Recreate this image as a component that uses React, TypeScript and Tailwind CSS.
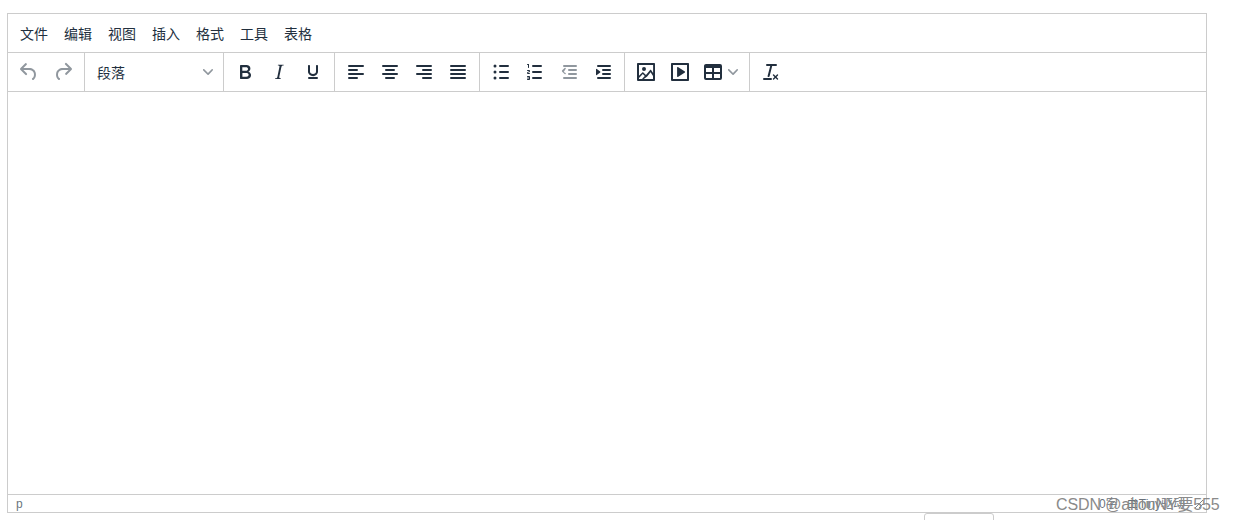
const ink = "#222f3e";

const MENUS = ["文件", "编辑", "视图", "插入", "格式", "工具", "表格"];

const Icon = ({ d, disabled, x = false }: { d: string; disabled?: boolean; x?: boolean }) => (
  <svg width="24" height="24" viewBox="0 0 24 24" fill={disabled ? "#222f3e80" : ink} fillRule={x ? "evenodd" : "nonzero"}>
    <path d={d} />
  </svg>
);

const icons = {
  undo: "M6.4 8H12c3.7 0 6.2 2 6.8 5.1.6 2.7-.4 5.6-2.3 6.8a1 1 0 0 1-1-1.8c1.1-.6 1.8-2.7 1.4-4.6-.5-2.1-2.1-3.5-4.9-3.5H6.4l3.3 3.3a1 1 0 1 1-1.4 1.4l-5-5a1 1 0 0 1 0-1.4l5-5a1 1 0 0 1 1.4 1.4L6.4 8z",
  redo: "M17.6 10H12c-2.8 0-4.4 1.4-4.9 3.5-.4 2 .3 4 1.4 4.6a1 1 0 1 1-1 1.8c-2-1.2-2.9-4.1-2.3-6.8.6-3 3.2-5.1 6.8-5.1h5.6l-3.3-3.3a1 1 0 1 1 1.4-1.4l5 5a1 1 0 0 1 0 1.4l-5 5a1 1 0 0 1-1.4-1.4l3.3-3.3z",
  bold: "M7.8 19c-.3 0-.5 0-.6-.2l-.2-.5V5.7c0-.2 0-.4.2-.5l.6-.2h5c1.5 0 2.7.3 3.5 1 .7.6 1.1 1.4 1.1 2.5a3 3 0 0 1-.6 1.9c-.4.6-1 1-1.6 1.2.4.1.9.3 1.3.6s.8.7 1 1.2c.4.4.5 1 .5 1.6 0 1.3-.4 2.3-1.3 3-.8.7-2.1 1-3.8 1H7.8zm5-8.3c.6 0 1.2-.1 1.6-.5.4-.3.6-.7.6-1.3 0-1.1-.8-1.7-2.3-1.7H9.3v3.5h3.4zm.5 6c.7 0 1.3-.1 1.7-.4.4-.4.6-.9.6-1.5s-.2-1-.7-1.4c-.4-.3-1-.4-2-.4H9.4v3.8h4z",
  italic: "M16.7 4.7l-.1.9h-.3c-.6 0-1 0-1.4.3-.3.3-.4.6-.5 1.1l-2.1 9.8v.6c0 .5.4.8 1.4.8h.2l-.2.8H8l.2-.8h.2c1.1 0 1.8-.5 2-1.5l2-9.8.1-.5c0-.6-.4-.8-1.4-.8h-.3l.2-.9h5.8z",
  underline: "M16 5c.6 0 1 .4 1 1v5.5a4 4 0 0 1-.4 1.8l-1 1.4a5.3 5.3 0 0 1-5.5 1 5 5 0 0 1-1.6-1c-.5-.4-.8-.9-1.1-1.4a4 4 0 0 1-.4-1.8V6c0-.6.4-1 1-1s1 .4 1 1v5.5c0 .3 0 .6.2 1l.6.7a3.3 3.3 0 0 0 2.2.8 3.4 3.4 0 0 0 2.2-.8c.3-.2.4-.5.6-.8l.2-.9V6c0-.6.4-1 1-1zM8 17h8a1 1 0 0 1 0 2H8a1 1 0 0 1 0-2z",
  alignLeft: "M5 5h14a1 1 0 0 1 0 2H5a1 1 0 1 1 0-2zm0 4h8a1 1 0 0 1 0 2H5a1 1 0 1 1 0-2zm0 8h8a1 1 0 0 1 0 2H5a1 1 0 0 1 0-2zm0-4h14a1 1 0 0 1 0 2H5a1 1 0 0 1 0-2z",
  alignCenter: "M5 5h14a1 1 0 0 1 0 2H5a1 1 0 1 1 0-2zm3 4h8a1 1 0 0 1 0 2H8a1 1 0 1 1 0-2zm0 8h8a1 1 0 0 1 0 2H8a1 1 0 0 1 0-2zm-3-4h14a1 1 0 0 1 0 2H5a1 1 0 0 1 0-2z",
  alignRight: "M5 5h14a1 1 0 0 1 0 2H5a1 1 0 1 1 0-2zm6 4h8a1 1 0 0 1 0 2h-8a1 1 0 0 1 0-2zm0 8h8a1 1 0 0 1 0 2h-8a1 1 0 0 1 0-2zm-6-4h14a1 1 0 0 1 0 2H5a1 1 0 0 1 0-2z",
  justify: "M5 5h14a1 1 0 0 1 0 2H5a1 1 0 1 1 0-2zm0 4h14a1 1 0 0 1 0 2H5a1 1 0 1 1 0-2zm0 4h14a1 1 0 0 1 0 2H5a1 1 0 0 1 0-2zm0 4h14a1 1 0 0 1 0 2H5a1 1 0 0 1 0-2z",
  bullets: "M11 5h8a1 1 0 0 1 0 2h-8a1 1 0 0 1 0-2zm0 6h8a1 1 0 0 1 0 2h-8a1 1 0 0 1 0-2zm0 6h8a1 1 0 0 1 0 2h-8a1 1 0 0 1 0-2zM6 4.5a1.5 1.5 0 1 1 0 3 1.5 1.5 0 0 1 0-3zm0 6a1.5 1.5 0 1 1 0 3 1.5 1.5 0 0 1 0-3zm0 6a1.5 1.5 0 1 1 0 3 1.5 1.5 0 0 1 0-3z",
  numbers: "M10 17h8a1 1 0 0 1 0 2h-8a1 1 0 0 1 0-2zm0-6h8a1 1 0 0 1 0 2h-8a1 1 0 0 1 0-2zm0-6h8a1 1 0 0 1 0 2h-8a1 1 0 1 1 0-2zM6 4v3.5c0 .3-.2.5-.5.5a.5.5 0 0 1-.5-.5V5h-.5a.5.5 0 0 1 0-1H6zm-1 8.8l.2.2h1.3c.3 0 .5.2.5.5s-.2.5-.5.5H4.9a1 1 0 0 1-.9-1V13c0-.4.3-.8.6-1l1.2-.4.2-.3a.2.2 0 0 0-.2-.2H4.5a.5.5 0 0 1-.5-.5c0-.3.2-.5.5-.5h1.6c.5 0 .9.4.9 1v.1c0 .4-.3.8-.6 1l-1.2.4-.2.3zM7 17v2c0 .6-.4 1-1 1H4.5a.5.5 0 0 1 0-1h1.2c.2 0 .3-.1.3-.3 0-.2-.1-.3-.3-.3H4.4a.4.4 0 1 1 0-.8h1.3c.2 0 .3-.1.3-.3 0-.2-.1-.3-.3-.3H4.5a.5.5 0 1 1 0-1H6c.6 0 1 .4 1 1v.1z",
  outdent: "M7 5h12a1 1 0 0 1 0 2H7a1 1 0 1 1 0-2zm5 4h7a1 1 0 0 1 0 2h-7a1 1 0 0 1 0-2zm0 4h7a1 1 0 0 1 0 2h-7a1 1 0 0 1 0-2zm-5 4h12a1 1 0 0 1 0 2H7a1 1 0 0 1 0-2zm1.6-3.9a.7.7 0 0 1-1 1l-2.4-2.4a1 1 0 0 1 0-1.4l2.4-2.4a.7.7 0 0 1 1 1L6.7 12l1.9 1.1z",
  indent: "M7 5h12a1 1 0 0 1 0 2H7a1 1 0 1 1 0-2zm5 4h7a1 1 0 0 1 0 2h-7a1 1 0 0 1 0-2zm0 4h7a1 1 0 0 1 0 2h-7a1 1 0 0 1 0-2zm-5 4h12a1 1 0 0 1 0 2H7a1 1 0 0 1 0-2zM5 9.3a.5.5 0 0 1 .8-.3l3.4 2.6a.5.5 0 0 1 0 .8L5.8 15a.5.5 0 0 1-.8-.3V9.3z",
  image: "M5 15.7l3.3-3.2c.3-.3.7-.3 1 0L12 15l4.1-5c.3-.4.8-.4 1 0l2 2.9V5H5v10.7zM5 18.1V19h3l2.8-2.9-2-2L5 18.1zm14 .9v-3.1l-2.4-3.6-3.4 4.1L9.8 19H19zM4 3h16c.6 0 1 .4 1 1v16c0 .6-.4 1-1 1H4a1 1 0 0 1-1-1V4c0-.6.4-1 1-1zm6 8a2 2 0 1 1 0-4 2 2 0 0 1 0 4z",
  media: "M4 3h16c.6 0 1 .4 1 1v16c0 .6-.4 1-1 1H4a1 1 0 0 1-1-1V4c0-.6.4-1 1-1zm1 2v14h14V5H5zm4.1 2.4c0-.4.5-.7.8-.4l7 4.5c.3.2.3.7 0 .9l-7 4.5c-.3.2-.8 0-.8-.4V7.4z",
  table: "M19 4a2 2 0 0 1 2 2v12a2 2 0 0 1-2 2H5a2 2 0 0 1-2-2V6c0-1.1.9-2 2-2h14zM5 14v4h6v-4H5zm14 0h-6v4h6v-4zm0-6h-6v4h6V8zM5 12h6V8H5v4z",
  clear: "M13.2 6l-2.6 10.2a1 1 0 0 1-1 .8h-.2a.8.8 0 0 1-.8-1L11.2 6H8a1 1 0 1 1 0-2h9a1 1 0 0 1 0 2h-3.8zM5 18h7a1 1 0 0 1 0 2H5a1 1 0 0 1 0-2zm13 1.5L16.5 18 15 19.5a.7.7 0 0 1-1-1l1.5-1.5-1.5-1.5a.7.7 0 0 1 1-1l1.5 1.5 1.5-1.5a.7.7 0 0 1 1 1L17.5 17l1.5 1.5a.7.7 0 0 1-1 1z",
};

const Chevron = ({ w = 10 }: { w?: number }) => (
  <svg width={w} height={w} viewBox="0 0 10 10" fill="#222f3e80">
    <path d="M8.7 2.2c.3-.3.8-.3 1 0 .4.4.4.9 0 1.2L5.7 7.8c-.3.3-.9.3-1.2 0L.2 3.4a.8.8 0 0 1 0-1.2c.3-.3.8-.3 1.1 0L5 6l3.7-3.8z" />
  </svg>
);

const Btn = ({ d, disabled, x }: { d: string; disabled?: boolean; x?: boolean }) => (
  <button className="flex h-[38px] w-[34px] shrink-0 items-center justify-center">
    <Icon d={d} disabled={disabled} x={x} />
  </button>
);

const Group = ({ children, last }: { children: React.ReactNode; last?: boolean }) => (
  <div className={`flex items-center ${last ? "" : "border-r border-[#ccc]"}`}>{children}</div>
);

export default function App() {
  return (
    <div className="relative h-[520px] w-[1235px] overflow-hidden bg-white pl-[7px] pt-[13px] font-['Liberation_Sans','Noto_Sans_CJK_SC',sans-serif] text-[#222f3e]">
      <div className="flex h-[500px] w-[1200px] flex-col border border-[#ccc]">
        <div className="flex h-[39px] items-center gap-4 border-b border-[#ccc] pl-3 pt-[1px] text-sm">
          {MENUS.map((m) => (
            <span key={m} className="w-7 whitespace-nowrap">{m}</span>
          ))}
        </div>

        <div className="flex h-[39px] border-b border-[#ccc]">
          <Group>
            <div className="flex w-[76px] pl-1">
              <Btn d={icons.undo} disabled />
              <Btn d={icons.redo} disabled />
            </div>
          </Group>
          <Group>
            <div className="flex w-[138px] items-center justify-between pl-3 pr-[10px] text-sm">
              <span className="pt-[1px]">段落</span>
              <Chevron />
            </div>
          </Group>
          <Group>
            <div className="flex w-[110px] pl-1">
              <Btn d={icons.bold} />
              <Btn d={icons.italic} />
              <Btn d={icons.underline} />
            </div>
          </Group>
          <Group>
            <div className="flex w-[144px] pl-1">
              <Btn d={icons.alignLeft} />
              <Btn d={icons.alignCenter} />
              <Btn d={icons.alignRight} />
              <Btn d={icons.justify} />
            </div>
          </Group>
          <Group>
            <div className="flex w-[144px] pl-1">
              <Btn d={icons.bullets} />
              <Btn d={icons.numbers} />
              <Btn d={icons.outdent} disabled />
              <Btn d={icons.indent} />
            </div>
          </Group>
          <Group>
            <div className="flex w-[124px] pl-1">
              <Btn d={icons.image} />
              <Btn d={icons.media} />
              <div className="flex h-[38px] items-center pl-1">
                <Icon d={icons.table} />
                <span className="ml-[3px]"><Chevron /></span>
              </div>
            </div>
          </Group>
          <Group last>
            <div className="flex pl-1">
              <Btn d={icons.clear} />
            </div>
          </Group>
        </div>

        <div className="flex-1" />

        <div className="flex h-[18px] items-center justify-between border-t border-[#ccc] pl-2 pr-[2px] text-xs text-[rgba(34,47,62,0.7)]">
          <span>p</span>
          <div className="flex items-center gap-[9px] whitespace-nowrap">
            <span>0字</span>
            <span>由Tiny驱动</span>
            <svg width="10" height="10" viewBox="0 0 10 10" fill="none" stroke="#222f3e" strokeOpacity="0.6">
              <path d="M1 9l8-8M5 9l4-4" />
            </svg>
          </div>
        </div>
      </div>

      <div className="ml-[917px] h-3 w-[70px] rounded-t-[3px] border border-[#ccc] bg-white" />

      <span className="absolute left-[1056px] top-[493px] whitespace-nowrap text-base tracking-[-0.12px] text-[#8a8a8a]">CSDN @aitouNY要555</span>
    </div>
  );
}
